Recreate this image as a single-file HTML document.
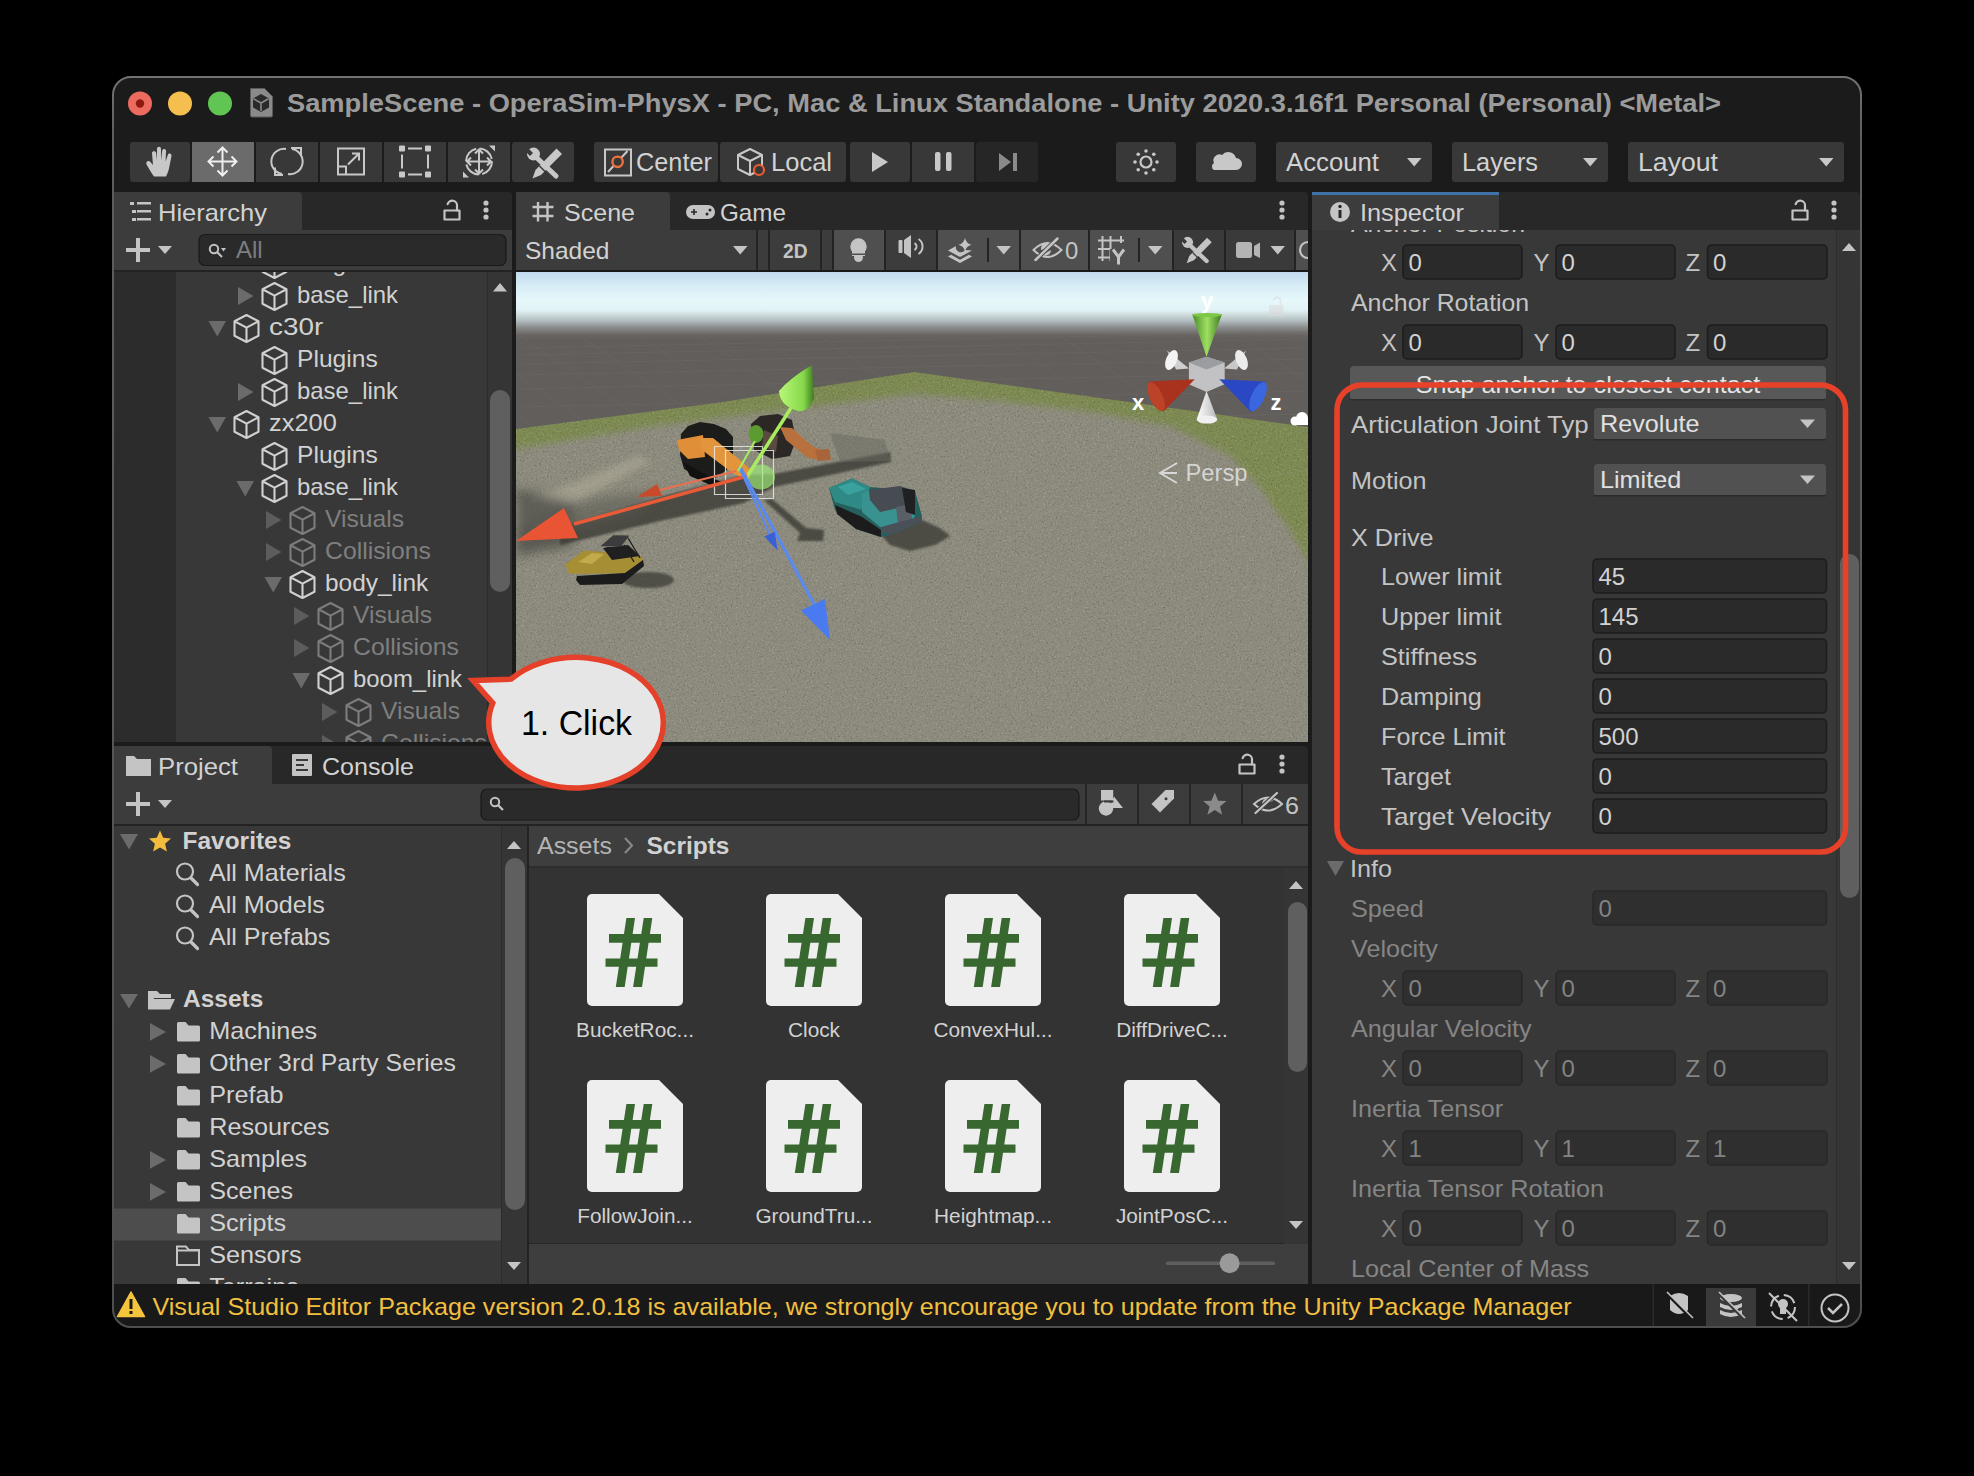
<!DOCTYPE html>
<html><head><meta charset="utf-8">
<style>
html,body{margin:0;padding:0;background:#000;width:1974px;height:1476px;overflow:hidden}
svg{position:absolute;left:0;top:0;display:block}
text{font-family:"Liberation Sans",sans-serif;white-space:pre}
</style></head><body>
<svg width="1974" height="1476" viewBox="0 0 1974 1476">
<defs><clipPath id="wclip"><rect x="112" y="76" width="1750" height="1252" rx="19"/></clipPath><linearGradient id="wb" x1="0" y1="76" x2="0" y2="1328" gradientUnits="userSpaceOnUse"><stop offset="0" stop-color="#727272"/><stop offset="0.05" stop-color="#5e5e5e"/><stop offset="1" stop-color="#4e4e4e"/></linearGradient></defs>
<rect x="0" y="0" width="1974" height="1476" fill="#000"/>
<g clip-path="url(#wclip)">
<rect x="112" y="76" width="1750" height="1252" fill="#1b1b1b"/>
<circle cx="140" cy="103.5" r="12" fill="#ed6a5e"/><circle cx="140" cy="103.5" r="4.2" fill="#8d1a10"/>
<circle cx="180" cy="103.5" r="12" fill="#f4bf4f"/>
<circle cx="220" cy="103.5" r="12" fill="#61c554"/>
<path d="M250.5 88.5 h14 l8 8 v19 a1.5 1.5 0 0 1 -1.5 1.5 h-19 a1.5 1.5 0 0 1 -1.5 -1.5 z" fill="#8a8a8a" stroke="#5a5a5a" stroke-width="1" />
<path d="M261 94 l8 4.5 v9 l-8 4.5 l-8 -4.5 v-9 z" fill="#2a2a2a" />
<path d="M261 103 v8 M261 103 l7.5 -4.2 M261 103 l-7.5 -4.2" fill="none" stroke="#8a8a8a" stroke-width="1.6" />
<text x="287" y="111.5" font-size="25" fill="#9b9b9b" font-weight="bold" textLength="1434" lengthAdjust="spacingAndGlyphs" >SampleScene - OperaSim-PhysX - PC, Mac &amp; Linux Standalone - Unity 2020.3.16f1 Personal (Personal) &lt;Metal&gt;</text>
<rect x="130" y="142" width="60" height="40" fill="#383838" rx="3" />
<rect x="192" y="142" width="62" height="40" fill="#6b6b6b" />
<rect x="256" y="142" width="62" height="40" fill="#383838" />
<rect x="320" y="142" width="62" height="40" fill="#383838" />
<rect x="384" y="142" width="62" height="40" fill="#383838" />
<rect x="448" y="142" width="62" height="40" fill="#383838" />
<rect x="512" y="142" width="62" height="40" fill="#383838" rx="3" />
<g transform="translate(146,146.5)"><path d="M8 30 C5 26 3 22 0.5 18 C-0.5 15.5 2 13.5 4 15 L7 18.5 L6 6.5 C6 4 10 4 10.2 6.5 L11 14 L11 2.2 C11 -0.5 15 -0.5 15 2.2 L15.2 14 L16.2 4.2 C16.5 1.8 20.2 2 20 4.5 L19.6 15 L21.8 8.5 C22.5 6 26 7 25.5 9.5 L23 22 C22 26 21 28 20 30 Z" fill="#c8c8c8"/></g>
<path d="M222.5 147.5 v28 M208.5 161.5 h28 M217.5 152.5 l5 -5 l5 5 M217.5 170.5 l5 5 l5 -5 M213.5 156.5 l-5 5 l5 5 M231.5 156.5 l5 5 l-5 5" fill="none" stroke="#eeeeee" stroke-width="2" />
<path d="M282 174.0 A12.5 12.5 0 0 1 286 149.0 M292 149.0 A12.5 12.5 0 0 1 288 174.0 M275 167.5 V175.0 H283 M291 148.0 H301 V155.5" fill="none" stroke="#c8c8c8" stroke-width="2" />
<path d="M338 148.5 h26 v26 h-26 z M338 166.5 h8 v8 M348 164.5 l11 -11 M352 153.5 h7 v7" fill="none" stroke="#c8c8c8" stroke-width="2" />
<rect x="399" y="145.5" width="6" height="6" fill="#c8c8c8" rx="1" />
<rect x="399" y="171.5" width="6" height="6" fill="#c8c8c8" rx="1" />
<rect x="425" y="145.5" width="6" height="6" fill="#c8c8c8" rx="1" />
<rect x="425" y="171.5" width="6" height="6" fill="#c8c8c8" rx="1" />
<path d="M408 148.5 h14 M408 174.5 h14 M402 154.5 v14 M428 154.5 v14" fill="none" stroke="#c8c8c8" stroke-width="2" />
<path d="M479 149.5 v24 M467 161.5 h24 M475 153.5 l4 -4 l4 4 M475 169.5 l4 4 l4 -4 M471 157.5 l-4 4 l4 4 M487 157.5 l4 4 l-4 4" fill="none" stroke="#c8c8c8" stroke-width="2" />
<circle cx="479" cy="161.5" r="13" fill="none" stroke="#c8c8c8" stroke-width="2" stroke-dasharray="17 3.5"/>
<path d="M489 145.5 h6 v6 z M463 171.5 v6 h6 z" fill="#c8c8c8" />
<path d="M537 158 L556 176" fill="none" stroke="#c8c8c8" stroke-width="5" stroke-linecap="round"/>
<circle cx="533.5" cy="154" r="6.5" fill="#c8c8c8"/>
<path d="M527 147 L533 153 L530 156 L524 150 Z" fill="#383838" />
<path d="M546 168 l-3 -3" fill="none" stroke="#383838" stroke-width="1.5" />
<path d="M556.5 148.5 L562 154 L541 175 L532.5 178.5 L535.5 170 Z" fill="#c8c8c8" />
<path d="M539.5 166 L545.5 172" fill="none" stroke="#383838" stroke-width="1.5" />
<rect x="594" y="142" width="124" height="40" fill="#383838" rx="3" />
<rect x="720" y="142" width="126" height="40" fill="#383838" rx="3" />
<path d="M605 149.5 h26 v26 h-26 z" fill="none" stroke="#c8c8c8" stroke-width="2" />
<path d="M608 172 l5.5 -6 M621.5 157.5 l6 -6.5" fill="none" stroke="#c8c8c8" stroke-width="2" />
<circle cx="617.6" cy="161.8" r="5.2" fill="none" stroke="#f07040" stroke-width="2.4"/>
<text x="636" y="170.5" font-size="25" fill="#d2d2d2" textLength="76" lengthAdjust="spacingAndGlyphs" >Center</text>
<path d="M750 149 l12 6 v14 l-12 6 l-12 -6 v-14 z M738 155 l12 6 l12 -6 M750 161 v14" fill="none" stroke="#c8c8c8" stroke-width="2" stroke-linejoin="round"/>
<circle cx="759" cy="170" r="5" fill="#383838" stroke="#f05a30" stroke-width="2.2"/>
<text x="771" y="170.5" font-size="25" fill="#d2d2d2" textLength="61" lengthAdjust="spacingAndGlyphs" >Local</text>
<rect x="850" y="142" width="60" height="40" fill="#383838" rx="3" />
<rect x="912" y="142" width="62" height="40" fill="#383838" />
<rect x="976" y="142" width="62" height="40" fill="#262626" rx="3" />
<path d="M872 152 l16 10 l-16 10 z" fill="#c8c8c8" />
<rect x="935" y="152" width="5.5" height="19" fill="#c8c8c8" rx="2" />
<rect x="946" y="152" width="5.5" height="19" fill="#c8c8c8" rx="2" />
<path d="M999 153 l12 9 l-12 9 z" fill="#8a8a8a" />
<rect x="1013" y="153" width="4" height="18" fill="#8a8a8a" />
<rect x="1116" y="142" width="60" height="40" fill="#383838" rx="3" />
<circle cx="1146" cy="162" r="5.5" fill="none" stroke="#c8c8c8" stroke-width="2.2"/>
<circle cx="1157.0" cy="162.0" r="1.8" fill="#c8c8c8"/>
<circle cx="1153.8" cy="169.8" r="1.8" fill="#c8c8c8"/>
<circle cx="1146.0" cy="173.0" r="1.8" fill="#c8c8c8"/>
<circle cx="1138.2" cy="169.8" r="1.8" fill="#c8c8c8"/>
<circle cx="1135.0" cy="162.0" r="1.8" fill="#c8c8c8"/>
<circle cx="1138.2" cy="154.2" r="1.8" fill="#c8c8c8"/>
<circle cx="1146.0" cy="151.0" r="1.8" fill="#c8c8c8"/>
<circle cx="1153.8" cy="154.2" r="1.8" fill="#c8c8c8"/>
<rect x="1196" y="142" width="60" height="40" fill="#383838" rx="3" />
<path d="M1214 170 h22 a6 6 0 0 0 0 -12 a8 8 0 0 0 -14 -3 a6 6 0 0 0 -8 8 a4 4 0 0 0 0 7 z" fill="#c8c8c8" />
<rect x="1276" y="142" width="156" height="40" fill="#383838" rx="3" />
<text x="1286" y="170.5" font-size="25" fill="#d2d2d2" textLength="93" lengthAdjust="spacingAndGlyphs" >Account</text>
<path d="M1407 158 h14.5 l-7.25 8.5 z" fill="#c8c8c8" />
<rect x="1452" y="142" width="156" height="40" fill="#383838" rx="3" />
<text x="1462" y="170.5" font-size="25" fill="#d2d2d2" textLength="76" lengthAdjust="spacingAndGlyphs" >Layers</text>
<path d="M1583 158 h14.5 l-7.25 8.5 z" fill="#c8c8c8" />
<rect x="1628" y="142" width="216" height="40" fill="#383838" rx="3" />
<text x="1638" y="170.5" font-size="25" fill="#d2d2d2" textLength="80" lengthAdjust="spacingAndGlyphs" >Layout</text>
<path d="M1819 158 h14.5 l-7.25 8.5 z" fill="#c8c8c8" />
<path d="M114 192 h394 a4 4 0 0 1 4 4 v34 h-398 z" fill="#282828"/>
<path d="M516 192 h788 a4 4 0 0 1 4 4 v34 h-792 z" fill="#282828"/>
<path d="M1312 192 h544 a4 4 0 0 1 4 4 v34 h-548 z" fill="#282828"/>
<path d="M114 746 h1190 a4 4 0 0 1 4 4 v34 h-1194 z" fill="#282828"/>
<path d="M114 192 h184 a4 4 0 0 1 4 4 v34 h-188 z" fill="#3c3c3c"/>
<rect x="130" y="202" width="4" height="3" fill="#c4c4c4" />
<rect x="137" y="202" width="14" height="2.5" fill="#c4c4c4" />
<rect x="132" y="210" width="4" height="3" fill="#c4c4c4" />
<rect x="137" y="210" width="14" height="2.5" fill="#c4c4c4" />
<rect x="132" y="218" width="4" height="3" fill="#c4c4c4" />
<rect x="137" y="218" width="14" height="2.5" fill="#c4c4c4" />
<text x="158" y="221" font-size="24" fill="#d2d2d2" textLength="109" lengthAdjust="spacingAndGlyphs" >Hierarchy</text>
<path d="M444.5 210.5 h15 v9 h-15 z" fill="none" stroke="#c4c4c4" stroke-width="2.2" stroke-linejoin="round"/>
<path d="M457 210.5 v-4.5 a4.8 4.8 0 0 0 -9.4 -1.8" fill="none" stroke="#c4c4c4" stroke-width="2.2" stroke-linecap="round"/>
<circle cx="486" cy="203" r="2.6" fill="#c4c4c4"/>
<circle cx="486" cy="210" r="2.6" fill="#c4c4c4"/>
<circle cx="486" cy="217" r="2.6" fill="#c4c4c4"/>
<path d="M516 192 h150 a4 4 0 0 1 4 4 v34 h-154 z" fill="#3c3c3c"/>
<path d="M532.5 207 h21 M532.5 216 h21 M538 202 v19.5 M547.5 202 v19.5" fill="none" stroke="#c4c4c4" stroke-width="2.4" />
<text x="564" y="221" font-size="24" fill="#d2d2d2" textLength="71" lengthAdjust="spacingAndGlyphs" >Scene</text>
<rect x="686" y="205" width="29" height="14" rx="7" fill="#c4c4c4"/>
<path d="M691 212 h6 M694 209 v6" fill="none" stroke="#282828" stroke-width="1.6" />
<circle cx="707" cy="214" r="1.5" fill="#282828"/><circle cx="710" cy="210" r="1.5" fill="#282828"/>
<text x="720" y="221" font-size="24" fill="#d2d2d2" textLength="66" lengthAdjust="spacingAndGlyphs" >Game</text>
<circle cx="1282" cy="203" r="2.6" fill="#c4c4c4"/>
<circle cx="1282" cy="210" r="2.6" fill="#c4c4c4"/>
<circle cx="1282" cy="217" r="2.6" fill="#c4c4c4"/>
<path d="M1312 192 h183 a4 4 0 0 1 4 4 v34 h-187 z" fill="#3c3c3c"/>
<rect x="1312" y="192" width="187" height="3" fill="#3e72a8" />
<circle cx="1340" cy="212" r="10" fill="#c4c4c4"/>
<rect x="1338.5" y="210" width="3" height="8" fill="#282828" />
<circle cx="1340" cy="206.5" r="1.7" fill="#282828"/>
<text x="1360" y="221" font-size="24" fill="#d2d2d2" textLength="104" lengthAdjust="spacingAndGlyphs" >Inspector</text>
<path d="M1792.5 210.5 h15 v9 h-15 z" fill="none" stroke="#c4c4c4" stroke-width="2.2" stroke-linejoin="round"/>
<path d="M1805 210.5 v-4.5 a4.8 4.8 0 0 0 -9.4 -1.8" fill="none" stroke="#c4c4c4" stroke-width="2.2" stroke-linecap="round"/>
<circle cx="1834" cy="203" r="2.6" fill="#c4c4c4"/>
<circle cx="1834" cy="210" r="2.6" fill="#c4c4c4"/>
<circle cx="1834" cy="217" r="2.6" fill="#c4c4c4"/>
<path d="M114 746 h154 a4 4 0 0 1 4 4 v34 h-158 z" fill="#3c3c3c"/>
<path d="M126 756 h8 l3 3 h14 v17 h-25 z" fill="#c4c4c4" />
<text x="158" y="775" font-size="24" fill="#d2d2d2" textLength="80" lengthAdjust="spacingAndGlyphs" >Project</text>
<rect x="292" y="754" width="20" height="22" fill="#c4c4c4" rx="1" />
<path d="M296 760 h12 M296 765 h8 M296 770 h12" fill="none" stroke="#3a3a3a" stroke-width="2" />
<text x="322" y="775" font-size="24" fill="#d2d2d2" textLength="92" lengthAdjust="spacingAndGlyphs" >Console</text>
<path d="M1239.5 764.5 h15 v9 h-15 z" fill="none" stroke="#c4c4c4" stroke-width="2.2" stroke-linejoin="round"/>
<path d="M1252 764.5 v-4.5 a4.8 4.8 0 0 0 -9.4 -1.8" fill="none" stroke="#c4c4c4" stroke-width="2.2" stroke-linecap="round"/>
<circle cx="1282" cy="757" r="2.6" fill="#c4c4c4"/>
<circle cx="1282" cy="764" r="2.6" fill="#c4c4c4"/>
<circle cx="1282" cy="771" r="2.6" fill="#c4c4c4"/>
<rect x="114" y="230" width="398" height="40" fill="#3c3c3c" />
<rect x="114" y="270" width="398" height="2" fill="#232323" />
<rect x="114" y="272" width="398" height="470" fill="#383838" />
<rect x="114" y="272" width="62" height="470" fill="#2c2c2c" />
<path d="M138 238 v24 M126 250 h24" fill="none" stroke="#c4c4c4" stroke-width="4" />
<path d="M158 246 h14 l-7.0 8 z" fill="#c4c4c4" />
<rect x="199" y="234.5" width="307" height="31" fill="#2a2a2a" rx="6" stroke="#1a1a1a" stroke-width="1.2" />
<circle cx="214" cy="249" r="4.2" fill="none" stroke="#c4c4c4" stroke-width="2"/>
<path d="M217 252 l5 5" fill="none" stroke="#c4c4c4" stroke-width="2" />
<path d="M221 248 h5 l-2.5 3.5 z" fill="#c4c4c4" />
<text x="236" y="258" font-size="24" fill="#7d7d7d" >All</text>
<rect x="487" y="272" width="25" height="470" fill="#353535" />
<rect x="487" y="272" width="1" height="470" fill="#2c2c2c" />
<rect x="490" y="390" width="20" height="202" fill="#5f5f5f" rx="10" />
<path d="M493 291.5 h14 l-7 -8.5 z" fill="#c4c4c4" />
<rect x="516" y="230" width="792" height="40" fill="#3c3c3c" />
<rect x="516" y="270" width="792" height="2" fill="#191919" />
<rect x="1312" y="230" width="548" height="1054" fill="#383838" />
<rect x="1837" y="230" width="23" height="1054" fill="#353535" />
<rect x="1836" y="230" width="1" height="1054" fill="#2c2c2c" />
<rect x="1840" y="554" width="19" height="344" fill="#5f5f5f" rx="9.5" />
<path d="M1842 251 h14 l-7 -8 z" fill="#c4c4c4" />
<path d="M1842 1262 h14 l-7 8 z" fill="#c4c4c4" />
<rect x="114" y="784" width="1194" height="40" fill="#3c3c3c" />
<rect x="114" y="824" width="1194" height="2" fill="#232323" />
<path d="M138 792 v24 M126 804 h24" fill="none" stroke="#c4c4c4" stroke-width="4" />
<path d="M158 800 h14 l-7.0 8 z" fill="#c4c4c4" />
<rect x="481" y="789" width="598" height="31" fill="#2a2a2a" rx="6" stroke="#1a1a1a" stroke-width="1.2" />
<circle cx="495" cy="802" r="4.2" fill="none" stroke="#c4c4c4" stroke-width="2"/>
<path d="M498 805 l5 5" fill="none" stroke="#c4c4c4" stroke-width="2.2" />
<rect x="1085" y="784" width="52" height="40" fill="#3c3c3c" />
<rect x="1085" y="784" width="2" height="40" fill="#262626" />
<rect x="1137" y="784" width="52" height="40" fill="#3c3c3c" />
<rect x="1137" y="784" width="2" height="40" fill="#262626" />
<rect x="1189" y="784" width="52" height="40" fill="#3c3c3c" />
<rect x="1189" y="784" width="2" height="40" fill="#262626" />
<rect x="1241" y="784" width="67" height="40" fill="#3c3c3c" />
<rect x="1241" y="784" width="2" height="40" fill="#262626" />
<rect x="114" y="826" width="414" height="458" fill="#383838" />
<rect x="502" y="826" width="25" height="458" fill="#353535" />
<rect x="501" y="826" width="1" height="458" fill="#2c2c2c" />
<rect x="527" y="826" width="2" height="458" fill="#232323" />
<rect x="505" y="858" width="20" height="352" fill="#5f5f5f" rx="10" />
<path d="M507 849 h14 l-7 -8 z" fill="#c4c4c4" />
<path d="M507 1262 h14 l-7 8 z" fill="#c4c4c4" />
<rect x="529" y="826" width="779" height="40" fill="#3e3e3e" />
<rect x="529" y="866" width="779" height="2" fill="#2e2e2e" />
<rect x="529" y="868" width="779" height="376" fill="#333333" />
<rect x="529" y="1244" width="779" height="40" fill="#3e3e3e" />
<rect x="529" y="1243" width="779" height="1" fill="#262626" />
<rect x="1284" y="868" width="24" height="376" fill="#353535" />
<rect x="1288" y="902" width="19" height="170" fill="#5f5f5f" rx="9.5" />
<path d="M1289 889 h14 l-7 -8 z" fill="#c4c4c4" />
<path d="M1289 1221 h14 l-7 8 z" fill="#c4c4c4" />
<rect x="114" y="1284" width="1746" height="44" fill="#191919" />
<svg x="176" y="272" width="311" height="470" overflow="hidden"><g transform="translate(-176,-272)">
<path d="M274.5 251 L286.5 257.3 L286.5 271.7 L274.5 278 L262.5 271.7 L262.5 257.3 Z M262.5 257.3 L274.5 263.6 L286.5 257.3 M274.5 263.6 L274.5 278" fill="none" stroke="#d0d0d0" stroke-width="2.1" stroke-linejoin="round"/>
<text x="297" y="271" font-size="24" fill="#d2d2d2" textLength="80.7" lengthAdjust="spacingAndGlyphs" >Plugins</text>
<path d="M238 287 l15.5 9 l-15.5 9 z" fill="#6b6b6b" />
<path d="M274.5 283 L286.5 289.3 L286.5 303.7 L274.5 310 L262.5 303.7 L262.5 289.3 Z M262.5 289.3 L274.5 295.6 L286.5 289.3 M274.5 295.6 L274.5 310" fill="none" stroke="#d0d0d0" stroke-width="2.1" stroke-linejoin="round"/>
<text x="297" y="303" font-size="24" fill="#d2d2d2" textLength="101" lengthAdjust="spacingAndGlyphs" >base_link</text>
<path d="M208.5 321 h17.5 l-8.75 15.5 z" fill="#6b6b6b" />
<path d="M246.5 315 L258.5 321.3 L258.5 335.7 L246.5 342 L234.5 335.7 L234.5 321.3 Z M234.5 321.3 L246.5 327.6 L258.5 321.3 M246.5 327.6 L246.5 342" fill="none" stroke="#d0d0d0" stroke-width="2.1" stroke-linejoin="round"/>
<text x="269" y="335" font-size="24" fill="#d2d2d2" textLength="54.2" lengthAdjust="spacingAndGlyphs" >c30r</text>
<path d="M274.5 347 L286.5 353.3 L286.5 367.7 L274.5 374 L262.5 367.7 L262.5 353.3 Z M262.5 353.3 L274.5 359.6 L286.5 353.3 M274.5 359.6 L274.5 374" fill="none" stroke="#d0d0d0" stroke-width="2.1" stroke-linejoin="round"/>
<text x="297" y="367" font-size="24" fill="#d2d2d2" textLength="80.7" lengthAdjust="spacingAndGlyphs" >Plugins</text>
<path d="M238 383 l15.5 9 l-15.5 9 z" fill="#6b6b6b" />
<path d="M274.5 379 L286.5 385.3 L286.5 399.7 L274.5 406 L262.5 399.7 L262.5 385.3 Z M262.5 385.3 L274.5 391.6 L286.5 385.3 M274.5 391.6 L274.5 406" fill="none" stroke="#d0d0d0" stroke-width="2.1" stroke-linejoin="round"/>
<text x="297" y="399" font-size="24" fill="#d2d2d2" textLength="101" lengthAdjust="spacingAndGlyphs" >base_link</text>
<path d="M208.5 417 h17.5 l-8.75 15.5 z" fill="#6b6b6b" />
<path d="M246.5 411 L258.5 417.3 L258.5 431.7 L246.5 438 L234.5 431.7 L234.5 417.3 Z M234.5 417.3 L246.5 423.6 L258.5 417.3 M246.5 423.6 L246.5 438" fill="none" stroke="#d0d0d0" stroke-width="2.1" stroke-linejoin="round"/>
<text x="269" y="431" font-size="24" fill="#d2d2d2" textLength="67.8" lengthAdjust="spacingAndGlyphs" >zx200</text>
<path d="M274.5 443 L286.5 449.3 L286.5 463.7 L274.5 470 L262.5 463.7 L262.5 449.3 Z M262.5 449.3 L274.5 455.6 L286.5 449.3 M274.5 455.6 L274.5 470" fill="none" stroke="#d0d0d0" stroke-width="2.1" stroke-linejoin="round"/>
<text x="297" y="463" font-size="24" fill="#d2d2d2" textLength="80.7" lengthAdjust="spacingAndGlyphs" >Plugins</text>
<path d="M236.5 481 h17.5 l-8.75 15.5 z" fill="#6b6b6b" />
<path d="M274.5 475 L286.5 481.3 L286.5 495.7 L274.5 502 L262.5 495.7 L262.5 481.3 Z M262.5 481.3 L274.5 487.6 L286.5 481.3 M274.5 487.6 L274.5 502" fill="none" stroke="#d0d0d0" stroke-width="2.1" stroke-linejoin="round"/>
<text x="297" y="495" font-size="24" fill="#d2d2d2" textLength="101" lengthAdjust="spacingAndGlyphs" >base_link</text>
<path d="M266 511 l15.5 9 l-15.5 9 z" fill="#5c5c5c" />
<path d="M302.5 507 L314.5 513.3 L314.5 527.7 L302.5 534 L290.5 527.7 L290.5 513.3 Z M290.5 513.3 L302.5 519.6 L314.5 513.3 M302.5 519.6 L302.5 534" fill="none" stroke="#7c7c7c" stroke-width="2.1" stroke-linejoin="round"/>
<text x="325" y="527" font-size="24" fill="#7f7f7f" textLength="79" lengthAdjust="spacingAndGlyphs" >Visuals</text>
<path d="M266 543 l15.5 9 l-15.5 9 z" fill="#5c5c5c" />
<path d="M302.5 539 L314.5 545.3 L314.5 559.7 L302.5 566 L290.5 559.7 L290.5 545.3 Z M290.5 545.3 L302.5 551.6 L314.5 545.3 M302.5 551.6 L302.5 566" fill="none" stroke="#7c7c7c" stroke-width="2.1" stroke-linejoin="round"/>
<text x="325" y="559" font-size="24" fill="#7f7f7f" textLength="106" lengthAdjust="spacingAndGlyphs" >Collisions</text>
<path d="M264.5 577 h17.5 l-8.75 15.5 z" fill="#6b6b6b" />
<path d="M302.5 571 L314.5 577.3 L314.5 591.7 L302.5 598 L290.5 591.7 L290.5 577.3 Z M290.5 577.3 L302.5 583.6 L314.5 577.3 M302.5 583.6 L302.5 598" fill="none" stroke="#d0d0d0" stroke-width="2.1" stroke-linejoin="round"/>
<text x="325" y="591" font-size="24" fill="#d2d2d2" textLength="103.3" lengthAdjust="spacingAndGlyphs" >body_link</text>
<path d="M294 607 l15.5 9 l-15.5 9 z" fill="#5c5c5c" />
<path d="M330.5 603 L342.5 609.3 L342.5 623.7 L330.5 630 L318.5 623.7 L318.5 609.3 Z M318.5 609.3 L330.5 615.6 L342.5 609.3 M330.5 615.6 L330.5 630" fill="none" stroke="#7c7c7c" stroke-width="2.1" stroke-linejoin="round"/>
<text x="353" y="623" font-size="24" fill="#7f7f7f" textLength="79" lengthAdjust="spacingAndGlyphs" >Visuals</text>
<path d="M294 639 l15.5 9 l-15.5 9 z" fill="#5c5c5c" />
<path d="M330.5 635 L342.5 641.3 L342.5 655.7 L330.5 662 L318.5 655.7 L318.5 641.3 Z M318.5 641.3 L330.5 647.6 L342.5 641.3 M330.5 647.6 L330.5 662" fill="none" stroke="#7c7c7c" stroke-width="2.1" stroke-linejoin="round"/>
<text x="353" y="655" font-size="24" fill="#7f7f7f" textLength="106" lengthAdjust="spacingAndGlyphs" >Collisions</text>
<path d="M292.5 673 h17.5 l-8.75 15.5 z" fill="#6b6b6b" />
<path d="M330.5 667 L342.5 673.3 L342.5 687.7 L330.5 694 L318.5 687.7 L318.5 673.3 Z M318.5 673.3 L330.5 679.6 L342.5 673.3 M330.5 679.6 L330.5 694" fill="none" stroke="#d0d0d0" stroke-width="2.1" stroke-linejoin="round"/>
<text x="353" y="687" font-size="24" fill="#d2d2d2" textLength="109.1" lengthAdjust="spacingAndGlyphs" >boom_link</text>
<path d="M322 703 l15.5 9 l-15.5 9 z" fill="#5c5c5c" />
<path d="M358.5 699 L370.5 705.3 L370.5 719.7 L358.5 726 L346.5 719.7 L346.5 705.3 Z M346.5 705.3 L358.5 711.6 L370.5 705.3 M358.5 711.6 L358.5 726" fill="none" stroke="#7c7c7c" stroke-width="2.1" stroke-linejoin="round"/>
<text x="381" y="719" font-size="24" fill="#7f7f7f" textLength="79" lengthAdjust="spacingAndGlyphs" >Visuals</text>
<path d="M322 735 l15.5 9 l-15.5 9 z" fill="#5c5c5c" />
<path d="M358.5 731 L370.5 737.3 L370.5 751.7 L358.5 758 L346.5 751.7 L346.5 737.3 Z M346.5 737.3 L358.5 743.6 L370.5 737.3 M358.5 743.6 L358.5 758" fill="none" stroke="#7c7c7c" stroke-width="2.1" stroke-linejoin="round"/>
<text x="381" y="751" font-size="24" fill="#7f7f7f" textLength="106" lengthAdjust="spacingAndGlyphs" >Collisions</text>
</g></svg>
<rect x="756" y="230" width="2" height="40" fill="#232323" />
<rect x="768" y="230" width="2" height="40" fill="#232323" />
<text x="525" y="259" font-size="24" fill="#d2d2d2" textLength="84.5" lengthAdjust="spacingAndGlyphs" >Shaded</text>
<path d="M733 246 h14.5 l-7.25 8.5 z" fill="#c4c4c4" />
<text x="783" y="257.7" font-size="21" fill="#c4c4c4" font-weight="bold" textLength="24.5" lengthAdjust="spacingAndGlyphs" >2D</text>
<rect x="820" y="230" width="2" height="40" fill="#232323" />
<rect x="832" y="230" width="2" height="40" fill="#232323" />
<rect x="834" y="230" width="50" height="40" fill="#4f4f4f" />
<rect x="884" y="230" width="2" height="40" fill="#232323" />
<circle cx="858.5" cy="246.5" r="8.2" fill="#c4c4c4"/>
<path d="M852 251 h13 v5 h-13 z" fill="#c4c4c4" />
<circle cx="858.5" cy="257.5" r="4.5" fill="#c4c4c4"/>
<rect x="852" y="253.5" width="13" height="1.5" fill="#4f4f4f" />
<rect x="936" y="230" width="2" height="40" fill="#232323" />
<rect x="898.5" y="240" width="4" height="13" fill="#c4c4c4" rx="1" />
<path d="M904 240 l7 -5 v23 l-7 -5 z" fill="#c4c4c4" />
<path d="M914.5 243 a4 4 0 0 1 0 7 M918.5 239 a9 9 0 0 1 0 15" fill="none" stroke="#c4c4c4" stroke-width="2" />
<rect x="938" y="230" width="81" height="40" fill="#4f4f4f" />
<rect x="1019" y="230" width="2" height="40" fill="#232323" />
<rect x="987" y="238" width="2" height="24" fill="#232323" />
<path d="M948 256.5 l12 6.5 l12 -6.5 l-3 -1.8 l-9 5 l-9 -5 z" fill="#c4c4c4" />
<path d="M948 250.5 l8 -4.5 q-1 4 3 6 q4 1 6 -2 l7 0.5 l-12 6.5 z" fill="#c4c4c4" />
<path d="M965 238 q1.2 5.5 6.5 6.8 q-5.3 1.3 -6.5 6.8 q-1.2 -5.5 -6.5 -6.8 q5.3 -1.3 6.5 -6.8 z" fill="#c4c4c4" />
<path d="M996.5 246 h14.5 l-7.25 8.5 z" fill="#c4c4c4" />
<rect x="1021" y="230" width="67" height="40" fill="#4f4f4f" />
<rect x="1088" y="230" width="2" height="40" fill="#232323" />
<path d="M1033.5 250 q14 -14 28 0 q-14 14 -28 0 z" fill="none" stroke="#c4c4c4" stroke-width="2" />
<path d="M1041 250 a6 6 0 0 1 11 -4 z M1051 250 a6 6 0 0 1 -9 5 z" fill="#c4c4c4" />
<path d="M1035 260.5 l23 -22.5" fill="none" stroke="#4f4f4f" stroke-width="4.5" />
<path d="M1035.5 260 l22 -21.5" fill="none" stroke="#c4c4c4" stroke-width="2.5" stroke-linecap="round"/>
<text x="1065" y="258.5" font-size="24" fill="#c4c4c4" textLength="13.3" lengthAdjust="spacingAndGlyphs" >0</text>
<rect x="1090" y="230" width="82" height="40" fill="#4f4f4f" />
<rect x="1172" y="230" width="2" height="40" fill="#232323" />
<path d="M1098 240.5 h26 M1098 249 h13 M1098 257.5 h12 M1102.5 236 v25 M1110.5 236 v25 M1121 236 v7" fill="none" stroke="#c4c4c4" stroke-width="2" />
<rect x="1110" y="249" width="17" height="16" fill="#4f4f4f" />
<path d="M1113 249.5 l5.5 7.5 l5.5 -7.5 M1118.5 257 v7.5" fill="none" stroke="#c4c4c4" stroke-width="3" />
<rect x="1138" y="238" width="2" height="24" fill="#232323" />
<path d="M1148 246 h14.5 l-7.25 8.5 z" fill="#c4c4c4" />
<rect x="1174" y="230" width="50" height="40" fill="#3a3a3a" />
<rect x="1224" y="230" width="2" height="40" fill="#232323" />
<g transform="translate(1199,250) scale(0.85) translate(-547,-163)">
<path d="M537 158 L556 176" fill="none" stroke="#c4c4c4" stroke-width="5" stroke-linecap="round"/>
<circle cx="533.5" cy="154" r="6.5" fill="#c4c4c4"/>
<path d="M527 147 L533 153 L530 156 L524 150 Z" fill="#3a3a3a" />
<path d="M556.5 148.5 L562 154 L541 175 L532.5 178.5 L535.5 170 Z" fill="#c4c4c4" />
<path d="M539.5 166 L545.5 172" fill="none" stroke="#3a3a3a" stroke-width="1.5" />
</g>
<rect x="1226" y="230" width="68" height="40" fill="#3a3a3a" />
<rect x="1294" y="230" width="2" height="40" fill="#232323" />
<rect x="1236" y="242" width="16" height="16" fill="#b4b4b4" rx="2.5" />
<path d="M1254 246 l6 -3.5 v15.5 l-6 -3 z" fill="#b4b4b4" />
<path d="M1270.5 246 h14.5 l-7.25 8.5 z" fill="#c4c4c4" />
<rect x="1296" y="230" width="12" height="40" fill="#4f4f4f" />
<path d="M1308 242 a8 8 0 0 0 0 16" fill="none" stroke="#c4c4c4" stroke-width="2.2" />
<svg x="1312" y="230" width="524" height="1054" overflow="hidden"><g transform="translate(-1312,-230)">
<text x="1351" y="231.5" font-size="24" fill="#c4c4c4" textLength="174.0" lengthAdjust="spacingAndGlyphs" >Anchor Position</text>
<text x="1381" y="271.1" font-size="24" fill="#c4c4c4" >X</text>
<text x="1533.5" y="271.1" font-size="24" fill="#c4c4c4" >Y</text>
<text x="1685.5" y="271.1" font-size="24" fill="#c4c4c4" >Z</text>
<rect x="1403.0" y="245.0" width="119" height="34" fill="#2a2a2a" rx="4" stroke="#1c1c1c" stroke-width="1.5" />
<text x="1408.5" y="271.1" font-size="24" fill="#d2d2d2" >0</text>
<rect x="1556.0" y="245.0" width="119" height="34" fill="#2a2a2a" rx="4" stroke="#1c1c1c" stroke-width="1.5" />
<text x="1561.5" y="271.1" font-size="24" fill="#d2d2d2" >0</text>
<rect x="1707.5" y="245.0" width="119.5" height="34" fill="#2a2a2a" rx="4" stroke="#1c1c1c" stroke-width="1.5" />
<text x="1713" y="271.1" font-size="24" fill="#d2d2d2" >0</text>
<text x="1351" y="311.3" font-size="24" fill="#c4c4c4" textLength="178.2" lengthAdjust="spacingAndGlyphs" >Anchor Rotation</text>
<text x="1381" y="351.1" font-size="24" fill="#c4c4c4" >X</text>
<text x="1533.5" y="351.1" font-size="24" fill="#c4c4c4" >Y</text>
<text x="1685.5" y="351.1" font-size="24" fill="#c4c4c4" >Z</text>
<rect x="1403.0" y="325.0" width="119" height="34" fill="#2a2a2a" rx="4" stroke="#1c1c1c" stroke-width="1.5" />
<text x="1408.5" y="351.1" font-size="24" fill="#d2d2d2" >0</text>
<rect x="1556.0" y="325.0" width="119" height="34" fill="#2a2a2a" rx="4" stroke="#1c1c1c" stroke-width="1.5" />
<text x="1561.5" y="351.1" font-size="24" fill="#d2d2d2" >0</text>
<rect x="1707.5" y="325.0" width="119.5" height="34" fill="#2a2a2a" rx="4" stroke="#1c1c1c" stroke-width="1.5" />
<text x="1713" y="351.1" font-size="24" fill="#d2d2d2" >0</text>
<rect x="1350" y="366" width="476" height="34" fill="#585858" rx="4" />
<rect x="1350" y="399" width="476" height="1.5" fill="#2e2e2e" />
<text x="1588" y="392.5" font-size="24" fill="#e4e4e4" textLength="344.6" lengthAdjust="spacingAndGlyphs" text-anchor="middle" >Snap anchor to closest contact</text>
<text x="1351" y="433" font-size="24" fill="#c4c4c4" textLength="237.7" lengthAdjust="spacingAndGlyphs" >Articulation Joint Typ</text>
<rect x="1594" y="408" width="232" height="32" fill="#515151" rx="4" />
<rect x="1594" y="439" width="232" height="1.5" fill="#2a2a2a" />
<text x="1600" y="432" font-size="24" fill="#e0e0e0" textLength="99.4" lengthAdjust="spacingAndGlyphs" >Revolute</text>
<path d="M1800 419.5 h15 l-7.5 8.5 z" fill="#c4c4c4" />
<text x="1351" y="489" font-size="24" fill="#c4c4c4" textLength="75.6" lengthAdjust="spacingAndGlyphs" >Motion</text>
<rect x="1594" y="464" width="232" height="32" fill="#515151" rx="4" />
<rect x="1594" y="495" width="232" height="1.5" fill="#2a2a2a" />
<text x="1600" y="488" font-size="24" fill="#e0e0e0" textLength="81.2" lengthAdjust="spacingAndGlyphs" >Limited</text>
<path d="M1800 475.5 h15 l-7.5 8.5 z" fill="#c4c4c4" />
<text x="1351" y="545.5" font-size="24" fill="#c4c4c4" textLength="82.6" lengthAdjust="spacingAndGlyphs" >X Drive</text>
<text x="1381" y="585.1" font-size="24" fill="#c4c4c4" textLength="120.4" lengthAdjust="spacingAndGlyphs" >Lower limit</text>
<rect x="1593.0" y="559.0" width="233.5" height="34" fill="#2a2a2a" rx="4" stroke="#1c1c1c" stroke-width="1.5" />
<text x="1598.5" y="585.1" font-size="24" fill="#d2d2d2" >45</text>
<text x="1381" y="625.1" font-size="24" fill="#c4c4c4" textLength="120.4" lengthAdjust="spacingAndGlyphs" >Upper limit</text>
<rect x="1593.0" y="599.0" width="233.5" height="34" fill="#2a2a2a" rx="4" stroke="#1c1c1c" stroke-width="1.5" />
<text x="1598.5" y="625.1" font-size="24" fill="#d2d2d2" >145</text>
<text x="1381" y="665.1" font-size="24" fill="#c4c4c4" textLength="96.2" lengthAdjust="spacingAndGlyphs" >Stiffness</text>
<rect x="1593.0" y="639.0" width="233.5" height="34" fill="#2a2a2a" rx="4" stroke="#1c1c1c" stroke-width="1.5" />
<text x="1598.5" y="665.1" font-size="24" fill="#d2d2d2" >0</text>
<text x="1381" y="705.1" font-size="24" fill="#c4c4c4" textLength="100.8" lengthAdjust="spacingAndGlyphs" >Damping</text>
<rect x="1593.0" y="679.0" width="233.5" height="34" fill="#2a2a2a" rx="4" stroke="#1c1c1c" stroke-width="1.5" />
<text x="1598.5" y="705.1" font-size="24" fill="#d2d2d2" >0</text>
<text x="1381" y="745.1" font-size="24" fill="#c4c4c4" textLength="124.6" lengthAdjust="spacingAndGlyphs" >Force Limit</text>
<rect x="1593.0" y="719.0" width="233.5" height="34" fill="#2a2a2a" rx="4" stroke="#1c1c1c" stroke-width="1.5" />
<text x="1598.5" y="745.1" font-size="24" fill="#d2d2d2" >500</text>
<text x="1381" y="785.1" font-size="24" fill="#c4c4c4" textLength="70.0" lengthAdjust="spacingAndGlyphs" >Target</text>
<rect x="1593.0" y="759.0" width="233.5" height="34" fill="#2a2a2a" rx="4" stroke="#1c1c1c" stroke-width="1.5" />
<text x="1598.5" y="785.1" font-size="24" fill="#d2d2d2" >0</text>
<text x="1381" y="825.1" font-size="24" fill="#c4c4c4" textLength="170.0" lengthAdjust="spacingAndGlyphs" >Target Velocity</text>
<rect x="1593.0" y="799.0" width="233.5" height="34" fill="#2a2a2a" rx="4" stroke="#1c1c1c" stroke-width="1.5" />
<text x="1598.5" y="825.1" font-size="24" fill="#d2d2d2" >0</text>
<path d="M1327 861 h17 l-8.5 15 z" fill="#6b6b6b" />
<text x="1350" y="877" font-size="24" fill="#c4c4c4" textLength="42.0" lengthAdjust="spacingAndGlyphs" >Info</text>
<text x="1351" y="917" font-size="24" fill="#858585" textLength="72.9" lengthAdjust="spacingAndGlyphs" >Speed</text>
<rect x="1593.0" y="891.0" width="233.5" height="34" fill="#2f2f2f" rx="4" stroke="#282828" stroke-width="1.5" />
<text x="1598.5" y="917.1" font-size="24" fill="#838383" >0</text>
<text x="1351" y="957" font-size="24" fill="#858585" textLength="86.8" lengthAdjust="spacingAndGlyphs" >Velocity</text>
<text x="1381" y="997.1" font-size="24" fill="#858585" >X</text>
<text x="1533.5" y="997.1" font-size="24" fill="#858585" >Y</text>
<text x="1685.5" y="997.1" font-size="24" fill="#858585" >Z</text>
<rect x="1403.0" y="971.0" width="119" height="34" fill="#2f2f2f" rx="4" stroke="#282828" stroke-width="1.5" />
<text x="1408.5" y="997.1" font-size="24" fill="#838383" >0</text>
<rect x="1556.0" y="971.0" width="119" height="34" fill="#2f2f2f" rx="4" stroke="#282828" stroke-width="1.5" />
<text x="1561.5" y="997.1" font-size="24" fill="#838383" >0</text>
<rect x="1707.5" y="971.0" width="119.5" height="34" fill="#2f2f2f" rx="4" stroke="#282828" stroke-width="1.5" />
<text x="1713" y="997.1" font-size="24" fill="#838383" >0</text>
<text x="1351" y="1037" font-size="24" fill="#858585" textLength="180.7" lengthAdjust="spacingAndGlyphs" >Angular Velocity</text>
<text x="1381" y="1077.1" font-size="24" fill="#858585" >X</text>
<text x="1533.5" y="1077.1" font-size="24" fill="#858585" >Y</text>
<text x="1685.5" y="1077.1" font-size="24" fill="#858585" >Z</text>
<rect x="1403.0" y="1051.0" width="119" height="34" fill="#2f2f2f" rx="4" stroke="#282828" stroke-width="1.5" />
<text x="1408.5" y="1077.1" font-size="24" fill="#838383" >0</text>
<rect x="1556.0" y="1051.0" width="119" height="34" fill="#2f2f2f" rx="4" stroke="#282828" stroke-width="1.5" />
<text x="1561.5" y="1077.1" font-size="24" fill="#838383" >0</text>
<rect x="1707.5" y="1051.0" width="119.5" height="34" fill="#2f2f2f" rx="4" stroke="#282828" stroke-width="1.5" />
<text x="1713" y="1077.1" font-size="24" fill="#838383" >0</text>
<text x="1351" y="1117" font-size="24" fill="#858585" textLength="152.2" lengthAdjust="spacingAndGlyphs" >Inertia Tensor</text>
<text x="1381" y="1157.1" font-size="24" fill="#858585" >X</text>
<text x="1533.5" y="1157.1" font-size="24" fill="#858585" >Y</text>
<text x="1685.5" y="1157.1" font-size="24" fill="#858585" >Z</text>
<rect x="1403.0" y="1131.0" width="119" height="34" fill="#2f2f2f" rx="4" stroke="#282828" stroke-width="1.5" />
<text x="1408.5" y="1157.1" font-size="24" fill="#838383" >1</text>
<rect x="1556.0" y="1131.0" width="119" height="34" fill="#2f2f2f" rx="4" stroke="#282828" stroke-width="1.5" />
<text x="1561.5" y="1157.1" font-size="24" fill="#838383" >1</text>
<rect x="1707.5" y="1131.0" width="119.5" height="34" fill="#2f2f2f" rx="4" stroke="#282828" stroke-width="1.5" />
<text x="1713" y="1157.1" font-size="24" fill="#838383" >1</text>
<text x="1351" y="1197" font-size="24" fill="#858585" textLength="253.1" lengthAdjust="spacingAndGlyphs" >Inertia Tensor Rotation</text>
<text x="1381" y="1237.1" font-size="24" fill="#858585" >X</text>
<text x="1533.5" y="1237.1" font-size="24" fill="#858585" >Y</text>
<text x="1685.5" y="1237.1" font-size="24" fill="#858585" >Z</text>
<rect x="1403.0" y="1211.0" width="119" height="34" fill="#2f2f2f" rx="4" stroke="#282828" stroke-width="1.5" />
<text x="1408.5" y="1237.1" font-size="24" fill="#838383" >0</text>
<rect x="1556.0" y="1211.0" width="119" height="34" fill="#2f2f2f" rx="4" stroke="#282828" stroke-width="1.5" />
<text x="1561.5" y="1237.1" font-size="24" fill="#838383" >0</text>
<rect x="1707.5" y="1211.0" width="119.5" height="34" fill="#2f2f2f" rx="4" stroke="#282828" stroke-width="1.5" />
<text x="1713" y="1237.1" font-size="24" fill="#838383" >0</text>
<text x="1351" y="1277" font-size="24" fill="#858585" textLength="238.1" lengthAdjust="spacingAndGlyphs" >Local Center of Mass</text>
</g></svg>
<path d="M120 834 h18 l-9 15.5 z" fill="#6b6b6b" />
<path d="M160 830.5 l3.2 7.3 l7.8 0.7 l-5.9 5.2 l1.8 7.8 l-6.9 -4.1 l-6.9 4.1 l1.8 -7.8 l-5.9 -5.2 l7.8 -0.7 z" fill="#f4bc3c" />
<text x="182.5" y="849" font-size="24" fill="#d2d2d2" font-weight="bold" textLength="108.8" lengthAdjust="spacingAndGlyphs" >Favorites</text>
<circle cx="185" cy="871.5" r="8" fill="none" stroke="#c4c4c4" stroke-width="2.2"/>
<path d="M191 878 l6.5 6.5" fill="none" stroke="#c4c4c4" stroke-width="3.2" stroke-linecap="round"/>
<text x="209" y="881" font-size="24" fill="#d2d2d2" textLength="136.7" lengthAdjust="spacingAndGlyphs" >All Materials</text>
<circle cx="185" cy="903.5" r="8" fill="none" stroke="#c4c4c4" stroke-width="2.2"/>
<path d="M191 910 l6.5 6.5" fill="none" stroke="#c4c4c4" stroke-width="3.2" stroke-linecap="round"/>
<text x="209" y="913" font-size="24" fill="#d2d2d2" textLength="115.8" lengthAdjust="spacingAndGlyphs" >All Models</text>
<circle cx="185" cy="935.5" r="8" fill="none" stroke="#c4c4c4" stroke-width="2.2"/>
<path d="M191 942 l6.5 6.5" fill="none" stroke="#c4c4c4" stroke-width="3.2" stroke-linecap="round"/>
<text x="209" y="945" font-size="24" fill="#d2d2d2" textLength="121.4" lengthAdjust="spacingAndGlyphs" >All Prefabs</text>
<path d="M120 994 h18 l-9 14.5 z" fill="#6b6b6b" />
<path d="M148 991 h9 l3 3 h11 v4 h-17 l-5 11 h-1 z" fill="#c4c4c4" />
<path d="M153 999 h22 l-5 10.5 h-22 z" fill="#c4c4c4" />
<text x="183" y="1007" font-size="24" fill="#d2d2d2" font-weight="bold" textLength="80.3" lengthAdjust="spacingAndGlyphs" >Assets</text>
<rect x="114" y="1208.5" width="387" height="32" fill="#4d4d4d" />
<svg x="114" y="826" width="387" height="458" overflow="hidden"><g transform="translate(-114,-826)">
<path d="M150 1023.0999999999999 l16 8.8 l-16 8.8 z" fill="#6b6b6b" />
<path d="M177 1023.5999999999999 a1.5 1.5 0 0 1 1.5 -1.5 h7 l3 3.5 h10 a1.5 1.5 0 0 1 1.5 1.5 v13 a1.5 1.5 0 0 1 -1.5 1.5 h-20 a1.5 1.5 0 0 1 -1.5 -1.5 z" fill="#c4c4c4" />
<text x="209.2" y="1038.6" font-size="24" fill="#d2d2d2" textLength="107.8" lengthAdjust="spacingAndGlyphs" >Machines</text>
<path d="M150 1055.1 l16 8.8 l-16 8.8 z" fill="#6b6b6b" />
<path d="M177 1055.6 a1.5 1.5 0 0 1 1.5 -1.5 h7 l3 3.5 h10 a1.5 1.5 0 0 1 1.5 1.5 v13 a1.5 1.5 0 0 1 -1.5 1.5 h-20 a1.5 1.5 0 0 1 -1.5 -1.5 z" fill="#c4c4c4" />
<text x="209.2" y="1070.6" font-size="24" fill="#d2d2d2" textLength="246.7" lengthAdjust="spacingAndGlyphs" >Other 3rd Party Series</text>
<path d="M177 1087.6 a1.5 1.5 0 0 1 1.5 -1.5 h7 l3 3.5 h10 a1.5 1.5 0 0 1 1.5 1.5 v13 a1.5 1.5 0 0 1 -1.5 1.5 h-20 a1.5 1.5 0 0 1 -1.5 -1.5 z" fill="#c4c4c4" />
<text x="209.2" y="1102.6" font-size="24" fill="#d2d2d2" textLength="74.3" lengthAdjust="spacingAndGlyphs" >Prefab</text>
<path d="M177 1119.6 a1.5 1.5 0 0 1 1.5 -1.5 h7 l3 3.5 h10 a1.5 1.5 0 0 1 1.5 1.5 v13 a1.5 1.5 0 0 1 -1.5 1.5 h-20 a1.5 1.5 0 0 1 -1.5 -1.5 z" fill="#c4c4c4" />
<text x="209.2" y="1134.6" font-size="24" fill="#d2d2d2" textLength="120.4" lengthAdjust="spacingAndGlyphs" >Resources</text>
<path d="M150 1151.1 l16 8.8 l-16 8.8 z" fill="#6b6b6b" />
<path d="M177 1151.6 a1.5 1.5 0 0 1 1.5 -1.5 h7 l3 3.5 h10 a1.5 1.5 0 0 1 1.5 1.5 v13 a1.5 1.5 0 0 1 -1.5 1.5 h-20 a1.5 1.5 0 0 1 -1.5 -1.5 z" fill="#c4c4c4" />
<text x="209.2" y="1166.6" font-size="24" fill="#d2d2d2" textLength="98.0" lengthAdjust="spacingAndGlyphs" >Samples</text>
<path d="M150 1183.1 l16 8.8 l-16 8.8 z" fill="#6b6b6b" />
<path d="M177 1183.6 a1.5 1.5 0 0 1 1.5 -1.5 h7 l3 3.5 h10 a1.5 1.5 0 0 1 1.5 1.5 v13 a1.5 1.5 0 0 1 -1.5 1.5 h-20 a1.5 1.5 0 0 1 -1.5 -1.5 z" fill="#c4c4c4" />
<text x="209.2" y="1198.6" font-size="24" fill="#d2d2d2" textLength="84.0" lengthAdjust="spacingAndGlyphs" >Scenes</text>
<path d="M177 1215.6 a1.5 1.5 0 0 1 1.5 -1.5 h7 l3 3.5 h10 a1.5 1.5 0 0 1 1.5 1.5 v13 a1.5 1.5 0 0 1 -1.5 1.5 h-20 a1.5 1.5 0 0 1 -1.5 -1.5 z" fill="#c4c4c4" />
<text x="209.2" y="1230.6" font-size="24" fill="#d2d2d2" textLength="77.0" lengthAdjust="spacingAndGlyphs" >Scripts</text>
<path d="M177 1246.6 h9 l3 3.5 h10 v15 h-22 z M177 1250.6 h22" fill="none" stroke="#c4c4c4" stroke-width="2" />
<text x="209.2" y="1262.6" font-size="24" fill="#d2d2d2" textLength="92.4" lengthAdjust="spacingAndGlyphs" >Sensors</text>
<path d="M177 1279.6 a1.5 1.5 0 0 1 1.5 -1.5 h7 l3 3.5 h10 a1.5 1.5 0 0 1 1.5 1.5 v13 a1.5 1.5 0 0 1 -1.5 1.5 h-20 a1.5 1.5 0 0 1 -1.5 -1.5 z" fill="#c4c4c4" />
<text x="209.2" y="1294.6" font-size="24" fill="#d2d2d2" textLength="89.6" lengthAdjust="spacingAndGlyphs" >Terrains</text>
</g></svg>
<text x="537" y="853.5" font-size="24" fill="#b4b4b4" textLength="74.9" lengthAdjust="spacingAndGlyphs" >Assets</text>
<path d="M625 838 l7 7.5 l-7 7.5" fill="none" stroke="#8a8a8a" stroke-width="2" />
<text x="646.5" y="853.5" font-size="24" fill="#d2d2d2" font-weight="bold" textLength="83.0" lengthAdjust="spacingAndGlyphs" >Scripts</text>
<path d="M592 894 H659 L683 918 V1001 a5 5 0 0 1 -5 5 H592 a5 5 0 0 1 -5 -5 V899 a5 5 0 0 1 5 -5 z" fill="#eeeeee" />
<path d="M609 934 h52 v8.7 h-52 z M605.5 958.5 h52 v8.3 h-52 z" fill="#386830" />
<path d="M626.4 918 h8.6 l-10.3 69 h-8.9 z M643.7 918 h8.6 l-10.3 69 h-8.9 z" fill="#386830" />
<text x="635" y="1037" font-size="20" fill="#d2d2d2" textLength="117.9" lengthAdjust="spacingAndGlyphs" text-anchor="middle" >BucketRoc...</text>
<path d="M771 894 H838 L862 918 V1001 a5 5 0 0 1 -5 5 H771 a5 5 0 0 1 -5 -5 V899 a5 5 0 0 1 5 -5 z" fill="#eeeeee" />
<path d="M788 934 h52 v8.7 h-52 z M784.5 958.5 h52 v8.3 h-52 z" fill="#386830" />
<path d="M805.4 918 h8.6 l-10.3 69 h-8.9 z M822.7 918 h8.6 l-10.3 69 h-8.9 z" fill="#386830" />
<text x="814" y="1037" font-size="20" fill="#d2d2d2" textLength="52.0" lengthAdjust="spacingAndGlyphs" text-anchor="middle" >Clock</text>
<path d="M950 894 H1017 L1041 918 V1001 a5 5 0 0 1 -5 5 H950 a5 5 0 0 1 -5 -5 V899 a5 5 0 0 1 5 -5 z" fill="#eeeeee" />
<path d="M967 934 h52 v8.7 h-52 z M963.5 958.5 h52 v8.3 h-52 z" fill="#386830" />
<path d="M984.4 918 h8.6 l-10.3 69 h-8.9 z M1001.7 918 h8.6 l-10.3 69 h-8.9 z" fill="#386830" />
<text x="993" y="1037" font-size="20" fill="#d2d2d2" textLength="119.1" lengthAdjust="spacingAndGlyphs" text-anchor="middle" >ConvexHul...</text>
<path d="M1129 894 H1196 L1220 918 V1001 a5 5 0 0 1 -5 5 H1129 a5 5 0 0 1 -5 -5 V899 a5 5 0 0 1 5 -5 z" fill="#eeeeee" />
<path d="M1146 934 h52 v8.7 h-52 z M1142.5 958.5 h52 v8.3 h-52 z" fill="#386830" />
<path d="M1163.4 918 h8.6 l-10.3 69 h-8.9 z M1180.7 918 h8.6 l-10.3 69 h-8.9 z" fill="#386830" />
<text x="1172" y="1037" font-size="20" fill="#d2d2d2" textLength="111.7" lengthAdjust="spacingAndGlyphs" text-anchor="middle" >DiffDriveC...</text>
<path d="M592 1080 H659 L683 1104 V1187 a5 5 0 0 1 -5 5 H592 a5 5 0 0 1 -5 -5 V1085 a5 5 0 0 1 5 -5 z" fill="#eeeeee" />
<path d="M609 1120 h52 v8.7 h-52 z M605.5 1144.5 h52 v8.3 h-52 z" fill="#386830" />
<path d="M626.4 1104 h8.6 l-10.3 69 h-8.9 z M643.7 1104 h8.6 l-10.3 69 h-8.9 z" fill="#386830" />
<text x="635" y="1223.3" font-size="20" fill="#d2d2d2" textLength="115.6" lengthAdjust="spacingAndGlyphs" text-anchor="middle" >FollowJoin...</text>
<path d="M771 1080 H838 L862 1104 V1187 a5 5 0 0 1 -5 5 H771 a5 5 0 0 1 -5 -5 V1085 a5 5 0 0 1 5 -5 z" fill="#eeeeee" />
<path d="M788 1120 h52 v8.7 h-52 z M784.5 1144.5 h52 v8.3 h-52 z" fill="#386830" />
<path d="M805.4 1104 h8.6 l-10.3 69 h-8.9 z M822.7 1104 h8.6 l-10.3 69 h-8.9 z" fill="#386830" />
<text x="814" y="1223.3" font-size="20" fill="#d2d2d2" textLength="117.2" lengthAdjust="spacingAndGlyphs" text-anchor="middle" >GroundTru...</text>
<path d="M950 1080 H1017 L1041 1104 V1187 a5 5 0 0 1 -5 5 H950 a5 5 0 0 1 -5 -5 V1085 a5 5 0 0 1 5 -5 z" fill="#eeeeee" />
<path d="M967 1120 h52 v8.7 h-52 z M963.5 1144.5 h52 v8.3 h-52 z" fill="#386830" />
<path d="M984.4 1104 h8.6 l-10.3 69 h-8.9 z M1001.7 1104 h8.6 l-10.3 69 h-8.9 z" fill="#386830" />
<text x="993" y="1223.3" font-size="20" fill="#d2d2d2" textLength="117.9" lengthAdjust="spacingAndGlyphs" text-anchor="middle" >Heightmap...</text>
<path d="M1129 1080 H1196 L1220 1104 V1187 a5 5 0 0 1 -5 5 H1129 a5 5 0 0 1 -5 -5 V1085 a5 5 0 0 1 5 -5 z" fill="#eeeeee" />
<path d="M1146 1120 h52 v8.7 h-52 z M1142.5 1144.5 h52 v8.3 h-52 z" fill="#386830" />
<path d="M1163.4 1104 h8.6 l-10.3 69 h-8.9 z M1180.7 1104 h8.6 l-10.3 69 h-8.9 z" fill="#386830" />
<text x="1172" y="1223.3" font-size="20" fill="#d2d2d2" textLength="112.2" lengthAdjust="spacingAndGlyphs" text-anchor="middle" >JointPosC...</text>
<rect x="1166" y="1261.5" width="109" height="3.5" fill="#5f5f5f" rx="1.5" />
<circle cx="1229.6" cy="1263.3" r="10" fill="#9a9a9a"/>
<circle cx="1106" cy="808.5" r="7.2" fill="#c4c4c4"/>
<rect x="1101" y="790" width="12.2" height="10.5" fill="#c4c4c4" />
<path d="M1114 796.5 l9 11.5 h-14 z" fill="#c4c4c4" />
<rect x="1104" y="800.5" width="9.5" height="2" fill="#3c3c3c" />
<path d="M1151.5 804 l14 -14 h8.5 v8.5 l-14 14 z" fill="#c4c4c4" />
<circle cx="1166" cy="798.8" r="1.5" fill="#3c3c3c"/>
<path d="M1214.8 792.5 l3.4 8.2 l8.3 0.4 l-6.5 5.4 l2.2 8.3 l-7.4 -4.7 l-7.4 4.7 l2.2 -8.3 l-6.5 -5.4 l8.3 -0.4 z" fill="#8a8a8a" />
<path d="M1254 804 q14 -13 28 0 q-14 13 -28 0 z" fill="none" stroke="#c4c4c4" stroke-width="2" />
<path d="M1262 804 a6 6 0 0 1 11 -3 z" fill="#c4c4c4" />
<path d="M1255 813 l22 -20" fill="none" stroke="#3c3c3c" stroke-width="4" />
<path d="M1255.5 813 l21.5 -20" fill="none" stroke="#c4c4c4" stroke-width="2.2" stroke-linecap="round"/>
<text x="1285" y="814" font-size="24" fill="#c4c4c4" textLength="14.0" lengthAdjust="spacingAndGlyphs" >6</text>
<path d="M131 1292 l13.5 24.5 h-27 z" fill="#f4c43c" stroke="#f4c43c" stroke-width="1.5" stroke-linejoin="round"/>
<rect x="129.5" y="1299" width="3" height="10" fill="#191919" />
<rect x="129.5" y="1311" width="3" height="3" fill="#191919" />
<text x="152.5" y="1315" font-size="24" fill="#f2c040" textLength="1419" lengthAdjust="spacingAndGlyphs" >Visual Studio Editor Package version 2.0.18 is available, we strongly encourage you to update from the Unity Package Manager</text>
<rect x="1652.5" y="1284" width="1.5" height="44" fill="#2a2a2a" />
<rect x="1706" y="1288" width="50" height="40" fill="#3a3a3a" />
<rect x="1808" y="1284" width="1.5" height="44" fill="#2a2a2a" />
<path d="M1670 1296 q9 -6 18 0 v14 q-9 8 -18 0 z" fill="#c4c4c4" />
<path d="M1666 1293 l28 28" fill="none" stroke="#191919" stroke-width="3" />
<path d="M1667 1292 l26 26" fill="none" stroke="#c4c4c4" stroke-width="1.6" />
<ellipse cx="1731" cy="1298" rx="11" ry="4" fill="#c4c4c4"/>
<path d="M1720 1303 q11 6 22 0 v4 q-11 6 -22 0 z M1720 1310 q11 6 22 0 v4 q-11 6 -22 0 z" fill="#c4c4c4" />
<path d="M1718 1293 l28 28" fill="none" stroke="#3a3a3a" stroke-width="3" />
<path d="M1719 1292 l26 26" fill="none" stroke="#c4c4c4" stroke-width="1.6" />
<circle cx="1783" cy="1307" r="12" fill="none" stroke="#c4c4c4" stroke-width="2" stroke-dasharray="14 5"/>
<circle cx="1783" cy="1304" r="5" fill="#c4c4c4"/>
<rect x="1780" y="1308" width="6" height="6" fill="#c4c4c4" />
<path d="M1769 1293 l28 28" fill="none" stroke="#c4c4c4" stroke-width="2" />
<circle cx="1835" cy="1308" r="13.5" fill="none" stroke="#c4c4c4" stroke-width="2"/>
<path d="M1828 1308 l5 5 l9 -9" fill="none" stroke="#c4c4c4" stroke-width="2.5" />
<defs>
<linearGradient id="sky" x1="0" y1="272" x2="0" y2="340" gradientUnits="userSpaceOnUse">
<stop offset="0" stop-color="#c2daee"/><stop offset="0.2" stop-color="#d6ecf6"/><stop offset="0.42" stop-color="#e6f8fb"/>
<stop offset="0.56" stop-color="#e2f2f4"/><stop offset="0.71" stop-color="#b4c0c2"/><stop offset="0.82" stop-color="#888a8a"/><stop offset="0.93" stop-color="#686462"/><stop offset="1" stop-color="#625e5c"/></linearGradient>
<filter id="blur6" x="-20%" y="-20%" width="140%" height="140%"><feGaussianBlur stdDeviation="6"/></filter>
<filter id="blur1" x="-20%" y="-20%" width="140%" height="140%"><feGaussianBlur stdDeviation="1.2"/></filter>
<filter id="blur3" x="-20%" y="-20%" width="140%" height="140%"><feGaussianBlur stdDeviation="3"/></filter>
<filter id="blur12" x="-30%" y="-30%" width="160%" height="160%"><feGaussianBlur stdDeviation="12"/></filter>
<filter id="noiseW" x="0" y="0" width="100%" height="100%">
<feTurbulence type="fractalNoise" baseFrequency="0.55" numOctaves="2" seed="3" result="n"/>
<feColorMatrix in="n" type="matrix" values="0 0 0 0 1  0 0 0 0 1  0 0 0 0 1  4 0 0 0 -2.2" result="m"/>
<feComposite in="m" in2="SourceGraphic" operator="in"/>
</filter>
<filter id="noiseB" x="0" y="0" width="100%" height="100%">
<feTurbulence type="fractalNoise" baseFrequency="0.55" numOctaves="2" seed="7" result="n"/>
<feColorMatrix in="n" type="matrix" values="0 0 0 0 0  0 0 0 0 0  0 0 0 0 0  4 0 0 0 -2.2" result="m"/>
<feComposite in="m" in2="SourceGraphic" operator="in"/>
</filter>
<linearGradient id="gcone" x1="0" y1="0" x2="1" y2="0"><stop offset="0" stop-color="#b8f878"/><stop offset="0.7" stop-color="#86d84a"/><stop offset="1" stop-color="#3e7a20"/></linearGradient>
<linearGradient id="rcone" x1="0" y1="0" x2="1" y2="1"><stop offset="0" stop-color="#c84228"/><stop offset="1" stop-color="#8a2a18"/></linearGradient>
<linearGradient id="bcone" x1="0" y1="0" x2="1" y2="0"><stop offset="0" stop-color="#2a48c0"/><stop offset="1" stop-color="#4a78f0"/></linearGradient>
<linearGradient id="gcone2" x1="0" y1="0" x2="1" y2="0"><stop offset="0" stop-color="#4a8a28"/><stop offset="0.5" stop-color="#9ee062"/><stop offset="1" stop-color="#3e7a20"/></linearGradient>
<linearGradient id="wcone" x1="0" y1="0" x2="1" y2="0"><stop offset="0" stop-color="#ffffff"/><stop offset="1" stop-color="#b8b8b8"/></linearGradient>
</defs>
<svg x="516" y="272" width="792" height="470" overflow="hidden"><g transform="translate(-516,-272)">
<rect x="516" y="340" width="792" height="402" fill="#625e5c" />
<rect x="516" y="272" width="792" height="68" fill="url(#sky)" />
<path d="M-500 336 L-348 440 M-440 336 L-288 440 M-380 336 L-228 440 M-320 336 L-168 440 M-260 336 L-108 440 M-200 336 L-48 440 M-140 336 L12 440 M-80 336 L72 440 M-20 336 L132 440 M40 336 L192 440 M100 336 L252 440 M160 336 L312 440 M220 336 L372 440 M280 336 L432 440 M340 336 L492 440 M400 336 L552 440 M460 336 L612 440 M520 336 L672 440 M580 336 L732 440 M640 336 L792 440 M700 336 L852 440 M760 336 L912 440 M820 336 L972 440 M880 336 L1032 440 M940 336 L1092 440 M1000 336 L1152 440 M1060 336 L1212 440 M1120 336 L1272 440 M1180 336 L1332 440 M1240 336 L1392 440 M1300 336 L1452 440 M1360 336 L1512 440 M1420 336 L1572 440 M1480 336 L1632 440 M1540 336 L1692 440 M1600 336 L1752 440 M1660 336 L1812 440 M1720 336 L1872 440 M1780 336 L1932 440 M1840 336 L1992 440 M516 348 L1308 332 M516 355 L1308 339 M516 364 L1308 348 M516 375 L1308 359 M516 389 L1308 373 M516 407 L1308 391 M516 430 L1308 414" fill="none" stroke="#6f6b69" stroke-width="1" opacity="0.45"/>
<path d="M516 429 L716 403 L914 372 L1308 427 V742 H516 Z" fill="#7d8a52" />
<path d="M500 451 L516 449 L660 425 L800 408 L914 394 L1000 401 L1100 413 L1170 426 L1230 455 L1262 490 L1290 530 L1330 600 V760 H500 Z" fill="#8d8b7d" filter="url(#blur3)"/>
<clipPath id="terr"><path d="M516 429 L716 403 L914 372 L1308 427 V742 H516 Z"/></clipPath><g clip-path="url(#terr)">
<rect x="516" y="372" width="792" height="370" fill="#ffffff" filter="url(#noiseW)" opacity="0.15"/>
<rect x="516" y="372" width="792" height="370" fill="#000000" filter="url(#noiseB)" opacity="0.15"/>
</g>
<path d="M516 600 L1308 470 M516 520 L1000 420 M600 741 L1000 402 M1040 741 L1308 560 M900 741 L1200 470" fill="none" stroke="#a0a098" stroke-width="1" opacity="0.25"/>
<path d="M516 505 L580 480 L640 455 L650 462 L600 490 L540 520 L516 528 Z" fill="#b8b3a0" filter="url(#blur3)" opacity="0.45"/>
<path d="M516 488 L573 505 L573 545 L516 556 Z" fill="#45453f" filter="url(#blur6)" opacity="0.7"/>
<path d="M560 527 L660 497 L744 475 L774 474 L890 452 L891 462 L774 487 L744 503 L660 521 L560 545 Z" fill="#3a3a36" filter="url(#blur1)" opacity="0.8"/>
<path d="M520 520 L600 498 L660 490 L640 510 L560 535 Z" fill="#5a5a52" filter="url(#blur6)" opacity="0.6"/>
<path d="M830 433 L885 440 L890 461 L840 462 Z" fill="#6a6a62" opacity="0.5"/>
<path d="M764 500 L772 499 L806 528 L824 530 L823 541 L797 541 L800 533 Z" fill="#3a3a36" filter="url(#blur1)" opacity="0.8"/>
<path d="M881 535 L922 520 L940 528 L950 536 L935 545 L910 551 L890 545 Z" fill="#3a3a36" filter="url(#blur1)" opacity="0.78"/>
<ellipse cx="648" cy="580" rx="26" ry="8" fill="#3a3a36" opacity="0.75" filter="url(#blur1)"/>
<path d="M681 434 L688 426 L700 422 L714 424 L726 429 L733 437 L733 456 L727 470 L714 479 L700 478 L684 469 L680 455 Z" fill="#1c1c1a" />
<path d="M683 462 L712 478 L722 482 L715 487 L690 476 Z" fill="#111111" />
<path d="M677 440 L703 435 L705 457 L688 459 L679 450 Z" fill="#e08e38" />
<path d="M699 438 L713 438 L740 460 L752 471 L748 480 L734 474 L702 450 Z" fill="#e3953c" />
<path d="M751 424 L760 416 L778 414 L792 420 L796 440 L790 456 L772 459 L754 450 Z" fill="#2a2725" />
<path d="M764 430 L778 436 L776 452 L762 446 Z" fill="#5a4a40" />
<path d="M780 427 L792 428 L812 446 L826 452 L822 460 L808 458 L786 440 Z" fill="#b8703c" />
<path d="M815 450 L829 449 L831 460 L818 461 Z" fill="#a8643a" />
<ellipse cx="756" cy="434" rx="7.5" ry="9" fill="#5c9a32"/>
<path d="M829 488 L852 478.5 L870 487 L915 491 L922 516 L922 522 L891 535 L881 537 L856 529 L835 510 Z" fill="#25605e" />
<path d="M835 505 L862 517 L881 530 L881 537 L856 529 L837 514 Z" fill="#1c1c1c" />
<path d="M829 488 L852 478.5 L870 487 L862 510 L835 502 Z" fill="#2f8a86" />
<path d="M838 487 L852 482 L866 489 L848 495 Z" fill="#3aa29e" />
<path d="M862 494 L870 490 L915 491 L915 516 L911 524 L885 531 L862 512 Z" fill="#3a9290" />
<path d="M869 490 L900 486 L915 491 L912 505 L880 512 L870 500 Z" fill="#474b52" />
<path d="M896 507 L911 504 L912 520 L898 524 Z" fill="#5a5e66" />
<path d="M902 488 L915 490 L915 515 L906 512 Z" fill="#1e2022" />
<path d="M881 527 L922 516 L922 522 L891 534.5 L881 532 Z" fill="#4a5058" />
<path d="M565.3 564.4 L584 550.5 L606 552.3 L609.6 557.6 L640 555.5 L643.6 559.8 L625.9 573.2 L569.2 573.9 Z" fill="#a68e34" />
<path d="M578 562 L592 553 L604 554 L592 564 Z" fill="#c2aa4c" />
<path d="M603 548 L628 545 L640 556 L612 560 Z" fill="#1e1e1e" />
<path d="M624 545 L634 562 M628 538 L640 558" fill="none" stroke="#222" stroke-width="1.4" />
<path d="M600.4 546.3 L613.2 535.3 L629.5 535.6 L621 546.5 Z" fill="#3c3c3c" />
<path d="M606 547 L625 547 L630 556 L612 558 Z" fill="#202020" />
<path d="M577 576 L625 573 L643 560 L644 566 L622 584 L580 585 L576 580 Z" fill="#1c1c1c" />
<path d="M714.5 446.5 H762.5 V494.5 H714.5 Z M725.5 450.5 H773.5 V498.5 H725.5 Z" fill="none" stroke="#e8e8e8" stroke-width="1.2" opacity="0.85"/>
<ellipse cx="761" cy="477" rx="14" ry="12.5" fill="#a0f078" opacity="0.65"/>
<path d="M574 524 L747 476" fill="none" stroke="#e85a38" stroke-width="3.5" />
<path d="M660 490 L736 471" fill="none" stroke="#e87050" stroke-width="2" />
<path d="M516 541 L564 508 L578 538 Z" fill="#e85434" />
<path d="M637 497 L657 484 L662 496 Z" fill="#c84a2a" />
<path d="M740 467 L814 604" fill="none" stroke="#5a8af0" stroke-width="3.2" />
<path d="M739 467 L770 535" fill="none" stroke="#5a8af0" stroke-width="2" />
<path d="M830 640 L801 610.5 L825 599 Z" fill="#4a7af0" />
<path d="M777.6 550.8 L764.4 536.5 L774.8 531.8 Z" fill="#3a60d8" />
<path d="M748 475 L791 408" fill="none" stroke="#a8ec60" stroke-width="3.5" />
<path d="M738 471 L755 441" fill="none" stroke="#a8ec60" stroke-width="2" />
<path d="M812 365 L814 399 Q808 413 798 411 Q780 406 779 391 Q790 378 812 365 Z" fill="url(#gcone)" />
<path d="M1189 368.5 L1167 350.5 L1176 369.5 Z" fill="#d0d0d0" />
<ellipse cx="1171.5" cy="360" rx="5.5" ry="10.5" transform="rotate(22 1171.5 360)" fill="#f4f4f4"/>
<path d="M1224 368.5 L1246 350.5 L1237 369.5 Z" fill="#c8c8c8" />
<ellipse cx="1241.5" cy="360" rx="5.5" ry="10.5" transform="rotate(-22 1241.5 360)" fill="#ececec"/>
<path d="M1206.5 391 L1196.7 419.6 L1217.3 419.6 Z" fill="url(#wcone)" />
<ellipse cx="1207" cy="419.6" rx="10.3" ry="4" fill="#f0f0f0"/>
<path d="M1206.5 356.7 L1224.7 362.6 L1224.7 384.2 L1206.5 392 L1188.9 384.2 L1188.9 362.6 Z" fill="#c2c2c4" />
<path d="M1206.5 356.7 L1224.7 362.6 L1206.5 369.5 L1188.9 362.6 Z" fill="#9a9ca0" />
<path d="M1192.3 314.5 L1221.8 314.5 L1206.5 356.7 Z" fill="url(#gcone2)" />
<ellipse cx="1207" cy="315" rx="14.75" ry="2" fill="#7cc844"/>
<path d="M1148.6 381.5 L1194.7 379.3 L1163.3 411.7 Z" fill="#a8321e" />
<ellipse cx="1156" cy="396.5" rx="6.5" ry="15.8" transform="rotate(-25 1156 396.5)" fill="#bc4228"/>
<path d="M1265.5 381.5 L1219.3 379.3 L1250.7 411.7 Z" fill="#2a48c4" />
<ellipse cx="1258" cy="396.5" rx="6.5" ry="15.8" transform="rotate(25 1258 396.5)" fill="#3a66e0"/>
<text x="1207" y="307.5" font-size="22" fill="#ffffff" font-weight="bold" text-anchor="middle" >y</text>
<text x="1138" y="409.8" font-size="22" fill="#ffffff" font-weight="bold" text-anchor="middle" >x</text>
<text x="1276" y="409.8" font-size="22" fill="#ffffff" font-weight="bold" text-anchor="middle" >z</text>
<rect x="1269" y="305" width="14.3" height="11" fill="#d8d8d8" opacity="0.55"/>
<path d="M1280.5 305 v-4 a3.5 3.5 0 0 0 -7 -0.5" fill="none" stroke="#d8d8d8" stroke-width="1.8" opacity="0.55"/>
<circle cx="1302" cy="418" r="6" fill="#ffffff"/><circle cx="1295" cy="421" r="4.5" fill="#ffffff"/><rect x="1293" y="418" width="15" height="7" fill="#ffffff"/>
<path d="M1177 463 L1160 473 L1177 483 M1160 473 H1177" fill="none" stroke="#d8d8d8" stroke-width="1.8" />
<text x="1185.5" y="481" font-size="24" fill="#d4d4d4" textLength="62" lengthAdjust="spacingAndGlyphs" >Persp</text>
</g></svg>
<rect x="1337" y="385" width="508.5" height="467" rx="25" fill="none" stroke="#e8412a" stroke-width="5.6"/>
<path d="M473 680.5 L511 679.1 A87.3 65.3 0 1 1 492.8 703 Z" fill="#e6e6e6" stroke="#e5402a" stroke-width="5.5" stroke-linejoin="miter" stroke-miterlimit="10"/>
<text x="521" y="735.4" font-size="35" fill="#000000" textLength="111" lengthAdjust="spacingAndGlyphs" >1. Click</text>
</g>
<rect x="113" y="77" width="1748" height="1250" rx="18" fill="none" stroke="url(#wb)" stroke-width="2"/>
</svg>
</body></html>
